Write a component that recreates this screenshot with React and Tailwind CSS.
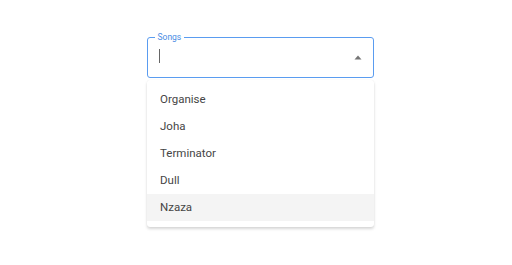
const songs = ['Organise', 'Joha', 'Terminator', 'Dull', 'Nzaza'];

export default function App() {
  return (
    <div className="h-[265px] w-[512px] bg-white pt-[37px] pl-[147px] font-['Roboto',sans-serif]">
      <div className="w-[227px]">
        {/* outlined input, focused */}
        <div className="relative h-[41px] rounded-[3px] border-[1.5px] border-[#5a9cf0]">
          <span className="absolute -top-[7.5px] left-[6.5px] bg-white px-[3px] text-[8.5px] leading-[12px] text-[#4a8ce4]">
            Songs
          </span>
          <div className="absolute left-[11px] top-[11px] h-[14px] w-px bg-[#666]"></div>
          <svg className="absolute left-[205px] top-[16px]" width="10" height="6" viewBox="0 0 10 6">
            <path d="M1.5 5.5 L5 1.5 L8.5 5.5 Z" fill="#757575" />
          </svg>
        </div>

        {/* listbox */}
        <div className="mt-[2px] rounded-[3px] bg-white py-[6px] shadow-[0_2px_3px_rgba(0,0,0,0.16),0_0_1px_rgba(0,0,0,0.08)]">
          {songs.map((s, i) => (
            <div
              key={s}
              className={`flex h-[27px] items-center pl-[13px] text-[11.5px] text-[#454545] ${i === 4 ? 'bg-[#f4f4f4]' : ''}`}
            >
              {s}
            </div>
          ))}
        </div>
      </div>
    </div>
  );
}
